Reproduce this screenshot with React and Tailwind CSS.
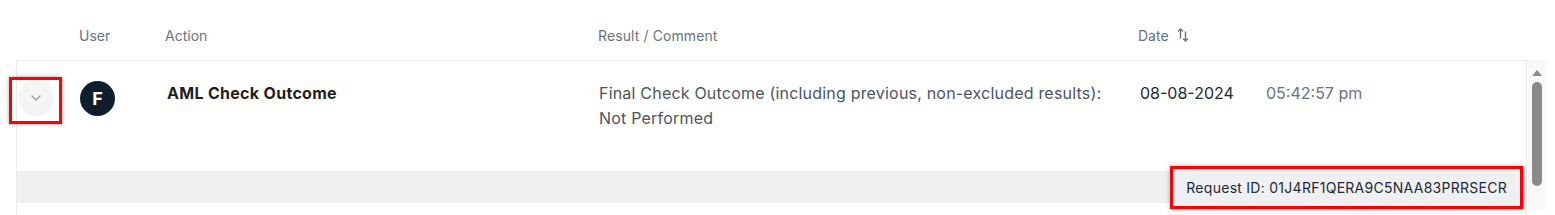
import React from "react";

function SortIcon() {
  return (
    <svg width="12" height="16" viewBox="0 0 12 16" fill="none" stroke="#6b7280" strokeWidth="1.4" strokeLinecap="round" strokeLinejoin="round">
      <path d="M3.5 11V2M1.5 4L3.5 2L5.5 4" />
      <path d="M8.5 5V14M6.5 12L8.5 14L10.5 12" />
    </svg>
  );
}

export default function App() {
  return (
    <div className="w-[1555px] h-[215px] bg-white overflow-hidden text-[#1f2937]" style={{ fontFamily: "Inter, 'Open Sans', sans-serif" }}>
      {/* header */}
      <div className="h-[60px] flex items-center pt-[10px] text-[14px] text-[#6b7280]">
        <div className="w-[79px]" />
        <div className="w-[86px]">User</div>
        <div className="w-[433px]">Action</div>
        <div className="w-[540px] tracking-[0.1px]">Result / Comment</div>
        <div className="flex items-center gap-[8px]">
          <span>Date</span>
          <SortIcon />
        </div>
      </div>
      {/* body */}
      <div className="flex">
        <div className="w-[16px]" />
        <div className="w-[1511px] border-l border-t border-r border-[#ebebeb]">
          <div className="h-[110px] flex items-start">
            <div className="relative w-[63px] h-full">
              <div className="absolute left-[1px] top-[19px] w-[36px] h-[36px] rounded-full bg-[#f5f5f5] flex items-center justify-center">
                <svg width="12" height="8" viewBox="0 0 12 8" fill="none" stroke="#a3a3a3" strokeWidth="1.6" strokeLinecap="round" strokeLinejoin="round">
                  <path d="M2 2L6 6L10 2" />
                </svg>
              </div>
              <div className="absolute left-[-8px] top-[16px] w-[53px] h-[47px] border-[3px] border-[#ff0000] shadow-[0_0_4px_rgba(0,0,0,0.35)]" />
            </div>
            <div className="w-[87px] pt-[20px]">
              <div className="w-[35px] h-[35px] rounded-full bg-[#0f1e2e] text-white flex items-center justify-center font-bold text-[18px]">F</div>
            </div>
            <div className="w-[432px] pt-[20px] font-bold text-[16px] leading-[25px] tracking-[0.3px] text-[#1f1f1f]">AML Check Outcome</div>
            <div className="w-[541px] pt-[20px] text-[16px] leading-[25px] tracking-[0.2px] text-[#4b5563]">
              Final Check Outcome (including previous, non-excluded results):<br />Not Performed
            </div>
            <div className="w-[126px] pt-[20px] text-[16px] leading-[25px] text-[#1f2937]">08-08-2024</div>
            <div className="pt-[20px] text-[16px] leading-[25px] text-[#6b7280]">05:42:57 pm</div>
          </div>
          <div className="h-[32px] bg-[#eff0f2] flex justify-end items-center pr-[3px]">
            <div className="h-[43px] px-[13px] border-[3px] border-[#ff0000] bg-[#eff0f2] shadow-[0_0_5px_rgba(0,0,0,0.3)] flex items-center text-[14px] tracking-[0.27px] text-[#1f2937]">
              Request ID: 01J4RF1QERA9C5NAA83PRRSECR
            </div>
          </div>
          <div className="h-[20px]" />
        </div>
        <div className="w-[18px] h-[150px] bg-[#f8f8f8] flex flex-col items-center pt-[9px] ml-[1px]">
          <svg width="12" height="8" viewBox="0 0 12 8"><path d="M6 1L11 7H1Z" fill="#8a8a8a" /></svg>
          <div className="mt-[5px] w-[10px] h-[104px] rounded-full bg-[#8a8a8a]" />
        </div>
      </div>
    </div>
  );
}
